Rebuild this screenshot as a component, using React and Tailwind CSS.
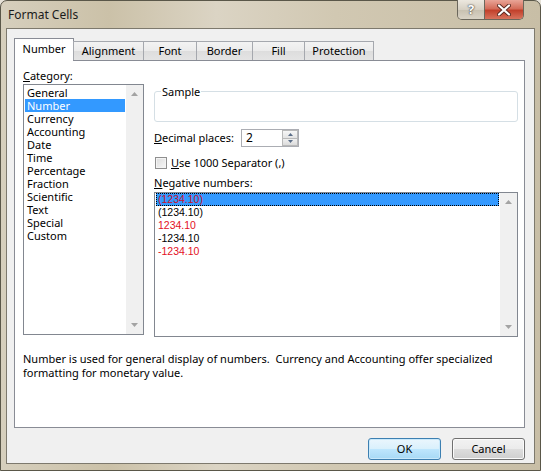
import React from "react";

const categories = [
  "General",
  "Number",
  "Currency",
  "Accounting",
  "Date",
  "Time",
  "Percentage",
  "Fraction",
  "Scientific",
  "Text",
  "Special",
  "Custom",
];

const negatives = [
  { text: "(1234.10)", red: true },
  { text: "(1234.10)", red: false },
  { text: "1234.10", red: true },
  { text: "-1234.10", red: false },
  { text: "-1234.10", red: true },
];

const tabs = [
  { name: "Number", w: "w-[60px]" },
  { name: "Alignment", w: "w-[71px]" },
  { name: "Font", w: "w-[54px]" },
  { name: "Border", w: "w-[57px]" },
  { name: "Fill", w: "w-[53px]" },
  { name: "Protection", w: "w-[70px]" },
];

function Arrow({ up }) {
  return (
    <svg width="7" height="4" viewBox="0 0 7 4">
      {up ? <path d="M0 4 L3.5 0 L7 4 Z" fill="#a3a3a3" /> : <path d="M0 0 L3.5 4 L7 0 Z" fill="#a3a3a3" />}
    </svg>
  );
}

function ScrollBar() {
  return (
    <div className="w-[17px] h-full bg-[#f0f0f0] flex flex-col justify-between items-center py-[7px]">
      <Arrow up />
      <Arrow />
    </div>
  );
}

export default function App() {
  return (
    <div
      className="w-[541px] h-[471px] bg-[#e6e2d8] text-black text-[11px]"
      style={{ fontFamily: '"Noto Sans", "Open Sans", sans-serif' }}
    >
      <div className="w-full h-full rounded-t-[7px] border border-[#5a5749] bg-[linear-gradient(90deg,#d6cfbd_0%,#cbc1a8_20%,#dbd4c4_40%,#d1c8b2_62%,#c8bea6_100%)] flex flex-col">
        {/* title bar */}
        <div className="h-[27px] flex items-start shrink-0">
          <div className="pl-[7px] pt-[6px] text-[12px] leading-[16px] text-[#1b1b1b]">Format Cells</div>
          <div className="ml-auto mr-[16px] -mt-px flex h-[20px] border border-t-0 border-[#6b675c] rounded-b-[5px] overflow-hidden">
            <div className="w-[27px] h-full border-r border-[#6b675c] bg-[linear-gradient(#ece8df,#d6d0c3_50%,#c7c0b0_51%,#d9d3c6)] flex items-center justify-center">
              <span className="text-[13px] font-bold leading-none text-white [text-shadow:0_0_1px_#333,0_0_2px_#444]">?</span>
            </div>
            <div className="w-[38px] h-full bg-[linear-gradient(#e9a597,#d46d5a_45%,#c2412c_55%,#d8735d)] flex items-center justify-center">
              <svg width="14" height="12" viewBox="0 0 14 12">
                <path d="M2 1.5 L12 10.5 M12 1.5 L2 10.5" stroke="#5a2a22" strokeWidth="4" strokeLinecap="round" />
                <path d="M2 1.5 L12 10.5 M12 1.5 L2 10.5" stroke="#ffffff" strokeWidth="2.2" strokeLinecap="round" />
              </svg>
            </div>
          </div>
        </div>

        {/* client area */}
        <div className="flex-1 mx-[5px] mb-[6px] border border-[#7d796d] bg-[#f0f0f0] pl-[7px] pt-[9px]">
          {/* tabs */}
          <div className="flex items-end h-[22px] relative z-10">
            {tabs.map((t, i) =>
              i === 0 ? (
                <div
                  key={t.name}
                  className={`${t.w} h-[23px] -mb-px bg-white border border-b-0 border-[#898c95] flex items-center justify-center pb-[2px]`}
                >
                  {t.name}
                </div>
              ) : (
                <div
                  key={t.name}
                  className={`${t.w} h-[19px] -ml-px bg-[linear-gradient(#f3f3f3,#ebebeb_50%,#dddddd_51%,#e4e4e4)] border border-b-0 border-[#a5a8ae] flex items-center justify-center`}
                >
                  {t.name}
                </div>
              )
            )}
          </div>

          {/* panel */}
          <div className="w-[511px] h-[368px] bg-white border border-[#898c95] pl-[8px] pt-[7px]">
            <div className="flex gap-[10px]">
              {/* left column */}
              <div className="w-[121px]">
                <div className="leading-[16px]">
                  <span className="underline">C</span>ategory:
                </div>
                <div className="h-[251px] border border-[#828790] flex">
                  <div className="flex-1 pt-[1px] px-px">
                    {categories.map((c) => (
                      <div
                        key={c}
                        className={`h-[13px] leading-[13px] pl-[2px] ${c === "Number" ? "bg-[#3399ff] text-white" : ""}`}
                      >
                        {c}
                      </div>
                    ))}
                  </div>
                  <ScrollBar />
                </div>
              </div>

              {/* right column */}
              <div className="w-[364px] mt-[16px]">
                <fieldset className="h-[38px] border border-[#d5dfe5] rounded-[3px] px-[6px]">
                  <legend className="px-px leading-[15px]">Sample</legend>
                </fieldset>

                <div className="flex items-center h-[18px] mt-[7px]">
                  <div className="w-[87px]">
                    <span className="underline">D</span>ecimal places:
                  </div>
                  <div className="w-[58px] h-[18px] border border-[#abadb3] bg-white flex">
                    <div className="flex-1 pl-[4px] text-[12px] leading-[16px]">2</div>
                    <div className="w-[16px] flex flex-col">
                      <div className="flex-1 border border-[#b9b9b9] bg-[linear-gradient(#f7f7f7,#e3e3e3)] flex items-center justify-center">
                        <svg width="5" height="3" viewBox="0 0 5 3"><path d="M0 3 L2.5 0 L5 3 Z" fill="#5b6e88" /></svg>
                      </div>
                      <div className="flex-1 border border-t-0 border-[#b9b9b9] bg-[linear-gradient(#f0f0f0,#dcdcdc)] flex items-center justify-center">
                        <svg width="5" height="3" viewBox="0 0 5 3"><path d="M0 0 L2.5 3 L5 0 Z" fill="#5b6e88" /></svg>
                      </div>
                    </div>
                  </div>
                </div>

                <div className="flex items-center h-[13px] mt-[9px]">
                  <div className="ml-px w-[12px] h-[12px] border border-[#8f8f8f] bg-[linear-gradient(135deg,#dcdcdc,#f8f8f8)] shadow-[inset_0_0_0_1px_#f4f4f4]" />
                  <div className="ml-[4px] leading-[13px]">
                    <span className="underline">U</span>se 1000 Separator (,)
                  </div>
                </div>

                <div className="mt-[6px] leading-[15px]">
                  <span className="underline">N</span>egative numbers:
                </div>
                <div
                  className="mt-[2px] h-[145px] border border-[#828790] flex"
                  style={{ fontFamily: '"Liberation Sans", Arial, sans-serif' }}
                >
                  <div className="flex-1 px-px text-[10.5px]">
                    {negatives.map((n, i) => (
                      <div
                        key={i}
                        className={`h-[13px] leading-[13px] pl-[2px] ${
                          i === 0
                            ? "bg-[#3399ff] text-[#c8102e] outline outline-1 outline-dotted outline-black -outline-offset-1"
                            : n.red
                            ? "text-[#e3101e]"
                            : "text-black"
                        }`}
                      >
                        {n.text}
                      </div>
                    ))}
                  </div>
                  <ScrollBar />
                </div>
              </div>
            </div>

            <div className="mt-[15px] leading-[14px]">
              Number is used for general display of numbers.&nbsp; Currency and Accounting offer specialized
              <br />
              formatting for monetary value.
            </div>
          </div>

          {/* buttons */}
          <div className="w-[511px] flex justify-end gap-[11px] mt-[10px]">
            <button className="w-[73px] h-[22px] rounded-[3px] border border-[#3c7fb1] bg-[linear-gradient(#eaf6fd,#d9f0fc_50%,#bee6fd_51%,#a7d9f5)] shadow-[inset_0_0_0_1px_#c9e9fb]">
              OK
            </button>
            <button className="w-[73px] h-[22px] rounded-[3px] border border-[#707070] bg-[linear-gradient(#f2f2f2,#ebebeb_50%,#dddddd_51%,#cfcfcf)] shadow-[inset_0_0_0_1px_#fbfbfb]">
              Cancel
            </button>
          </div>
        </div>
      </div>
    </div>
  );
}
